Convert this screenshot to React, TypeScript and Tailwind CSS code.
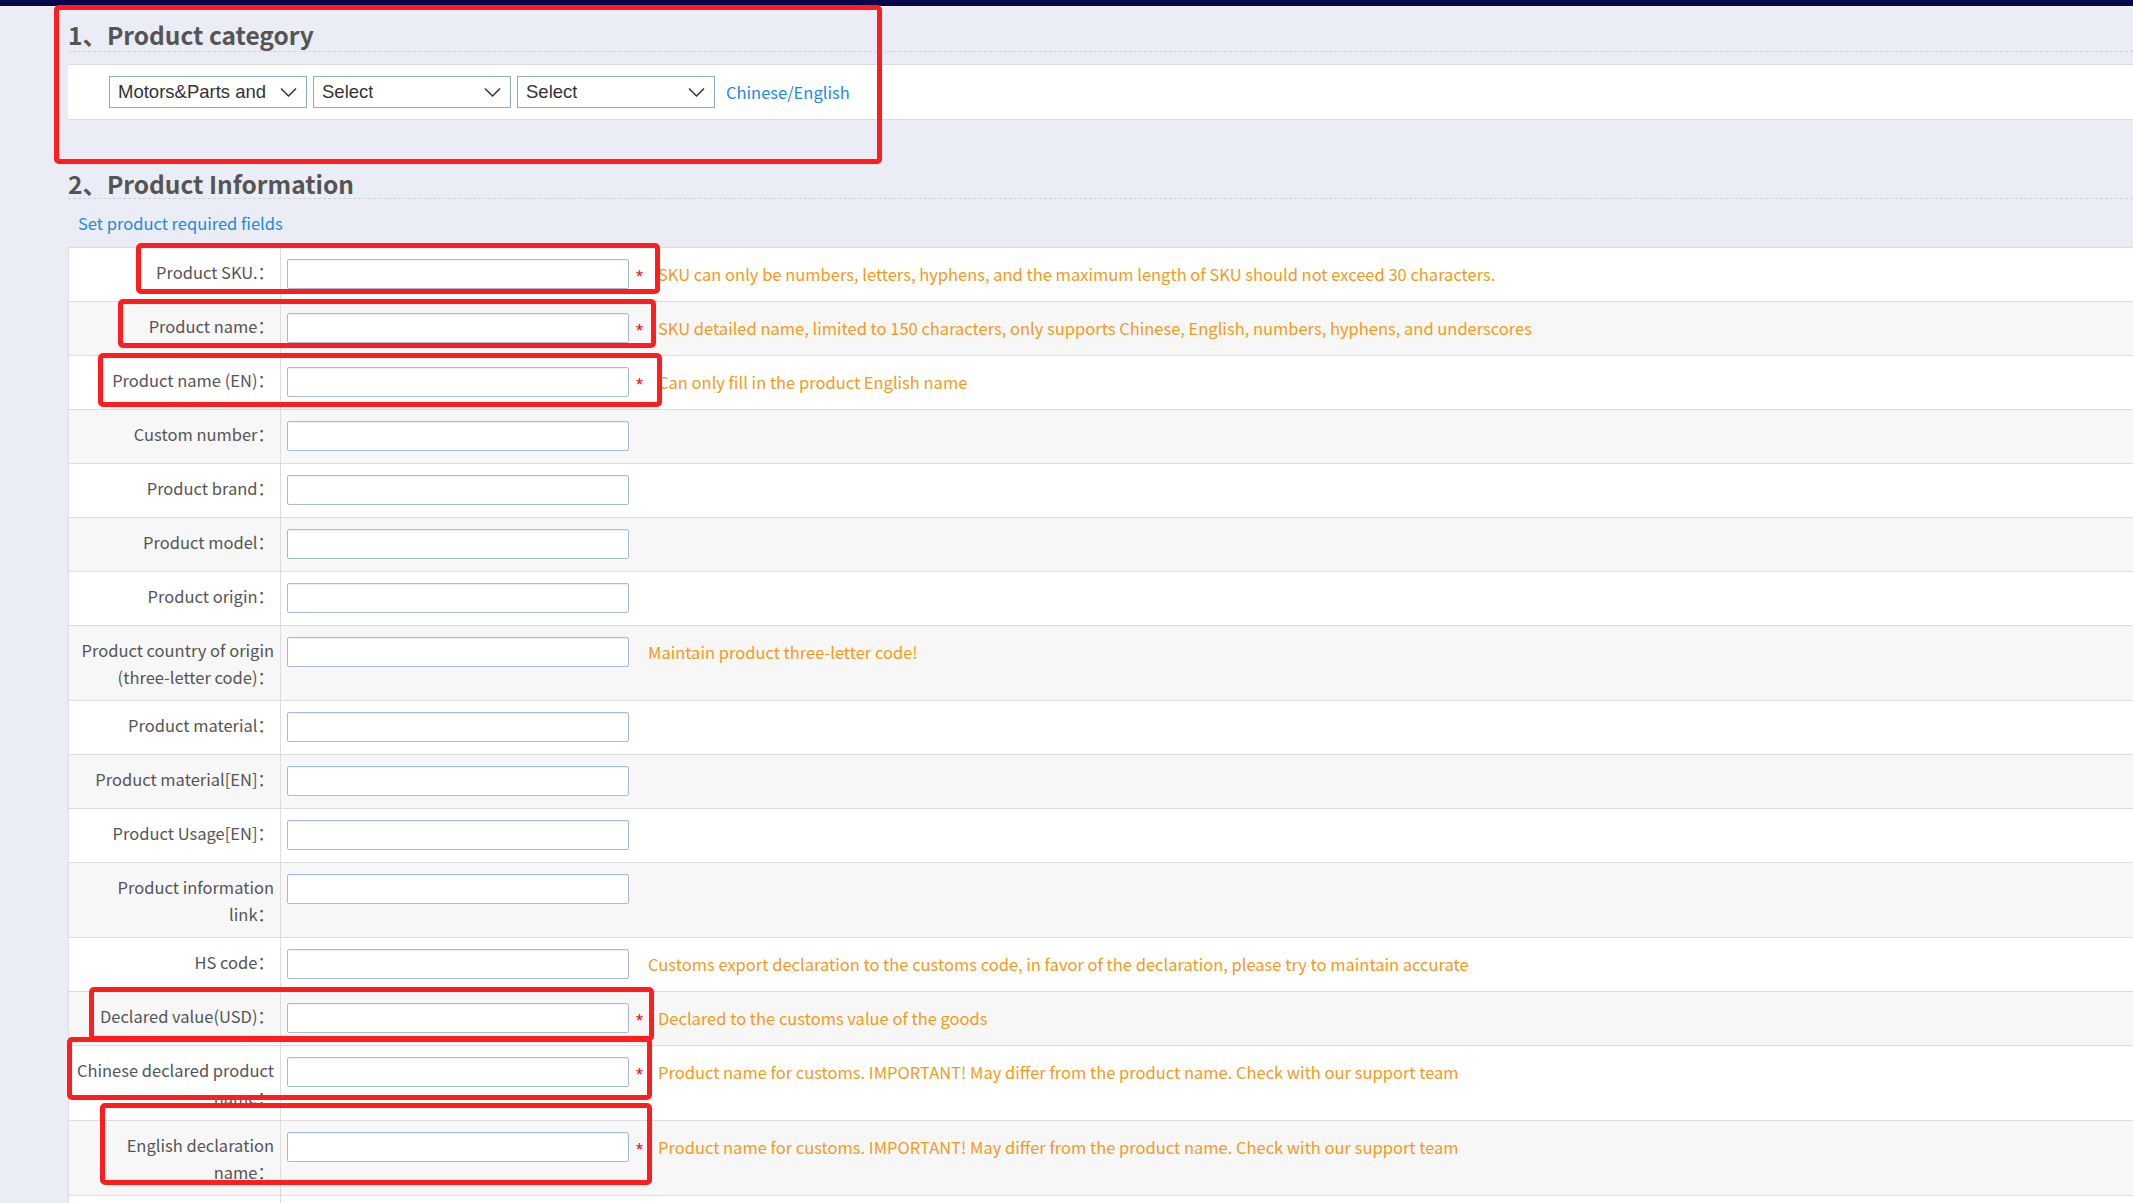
import type { ReactNode } from 'react';

type Row = {
    label: string[];
    required?: boolean;
    hint?: string;
};

const customsHint =
    'Product name for customs. IMPORTANT! May differ from the product name. Check with our support team';

const rows: Row[] = [
    { label: ['Product SKU.：'], required: true, hint: 'SKU can only be numbers, letters, hyphens, and the maximum length of SKU should not exceed 30 characters.' },
    { label: ['Product name：'], required: true, hint: 'SKU detailed name, limited to 150 characters, only supports Chinese, English, numbers, hyphens, and underscores' },
    { label: ['Product name (EN)：'], required: true, hint: 'Can only fill in the product English name' },
    { label: ['Custom number：'] },
    { label: ['Product brand：'] },
    { label: ['Product model：'] },
    { label: ['Product origin：'] },
    { label: ['Product country of origin', '(three-letter code)：'], hint: 'Maintain product three-letter code!' },
    { label: ['Product material：'] },
    { label: ['Product material[EN]：'] },
    { label: ['Product Usage[EN]：'] },
    { label: ['Product information', 'link：'] },
    { label: ['HS code：'], hint: 'Customs export declaration to the customs code, in favor of the declaration, please try to maintain accurate' },
    { label: ['Declared value(USD)：'], required: true, hint: 'Declared to the customs value of the goods' },
    { label: ['Chinese declared product', 'name：'], required: true, hint: customsHint },
    { label: ['English declaration', 'name：'], required: true, hint: customsHint },
    { label: [''] },
];

const uiFont = "font-['Noto_Sans_CJK_SC','Noto_Sans',sans-serif]";

const SectionTitle = ({ children, pad }: { children: ReactNode; pad: string }) => (
    <div className={`h-[46px] border-b border-dashed border-[#cfd2d8] ${pad}`}>
        <h2 className={`${uiFont} text-[24.5px] leading-[32px] font-bold text-[#555555]`}>{children}</h2>
    </div>
);

const Select = ({ value }: { value: string }) => (
    <div className="w-[198px] h-[32px] border border-[#8fa9c9] bg-white flex items-center justify-between pl-[8px] pr-[9px] font-['Liberation_Sans',Arial,sans-serif] text-[18.5px] text-[#333333]">
        <span className="whitespace-nowrap overflow-hidden">{value}</span>
        <svg width="17" height="11" viewBox="0 0 17 11" fill="none" className="shrink-0">
            <path d="M1 1.5 L8.5 9 L16 1.5" stroke="#333" strokeWidth="1.5" />
        </svg>
    </div>
);

// red annotation frames drawn over the form
const Frame = ({ className }: { className: string }) => (
    <div className={`absolute border-[5px] border-[#ff1d1d] rounded-[5px] pointer-events-none ${className}`} />
);

export default function App() {
    return (
        <div className={`relative min-h-screen bg-[#eaedf6] overflow-hidden ${uiFont}`}>
            <div className="h-[6px] bg-[#06074a]" />

            <div className="ml-[68px]">
                <SectionTitle pad="pt-[13px]">1、Product category</SectionTitle>

                <div className="mt-[12px] h-[56px] bg-white border-y border-[#dcdcdc] flex items-center gap-[6px] pl-[41px]">
                    <Select value="Motors&Parts and" />
                    <Select value="Select" />
                    <Select value="Select" />
                    <a className="ml-[5px] text-[16.5px] text-[#1e88e5] whitespace-nowrap">Chinese/English</a>
                </div>

                <div className="mt-[33px]">
                    <SectionTitle pad="pt-[15px]">2、Product Information</SectionTitle>
                </div>

                <div className="h-[48px] flex items-center pl-[10px] text-[16.5px] text-[#1e88e5]">
                    Set product required fields
                </div>

                <div className="border-t border-l border-[#dcdcdc] text-[16.5px]">
                    {rows.map((row, i) => (
                        <div
                            key={i}
                            className={`flex border-b border-[#dcdcdc] ${i % 2 === 0 ? 'bg-white' : 'bg-[#f7f7f7]'}`}
                        >
                            <div className="w-[212px] shrink-0 border-r border-[#dcdcdc] pt-[11px] pb-[10px] pr-[6px] text-right leading-[26.5px] text-[#555555]">
                                {row.label.map((line, j) => (
                                    <div key={j} className="whitespace-nowrap">{line}</div>
                                ))}
                            </div>
                            <div className="flex items-start pt-[11px] pb-[12px] pl-[6px]">
                                <div className="w-[342px] h-[30px] bg-white border border-[#a4bcd8] rounded-[2px] shadow-[inset_0_1px_1px_rgba(0,0,0,0.06)]" />
                                {row.required && (
                                    <span className="ml-[5px] w-[11px] pt-[6px] leading-[24px] text-center text-[#ff0000] text-[18px] font-['Liberation_Sans',Arial,sans-serif]">*</span>
                                )}
                                {row.hint && (
                                    <span
                                        className={`${row.required ? 'ml-[13px]' : 'ml-[19px]'} leading-[30px] text-[#f39a1e] whitespace-nowrap`}
                                    >
                                        {row.hint}
                                    </span>
                                )}
                            </div>
                        </div>
                    ))}
                </div>
            </div>

            <Frame className="left-[54px] top-[5px] w-[828px] h-[159px]" />
            <Frame className="left-[136px] top-[243px] w-[524px] h-[51px]" />
            <Frame className="left-[118px] top-[299px] w-[538px] h-[49px]" />
            <Frame className="left-[98px] top-[353px] w-[564px] h-[54px]" />
            <Frame className="left-[89px] top-[987px] w-[565px] h-[54px]" />
            <Frame className="left-[67px] top-[1037px] w-[585px] h-[63px]" />
            <Frame className="left-[100px] top-[1103px] w-[552px] h-[82px]" />
        </div>
    );
}
